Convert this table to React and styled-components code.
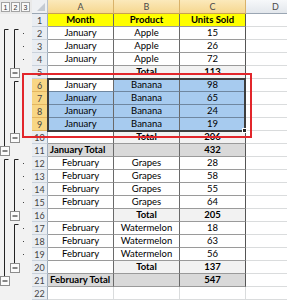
import React from "react";
import styled, {createGlobalStyle} from "styled-components";

const GlobalStyle = createGlobalStyle`
    body {
        margin: 0;
        background: #fff;
        font-family: Lato, "Liberation Sans", sans-serif;
    }
    #root {
        width: 287px;
        height: 300px;
        overflow: hidden;
    }
`;

const ROW_H = 13;
const HEAD_H = 14;

const rows = [
    {a: "Month", b: "Product", c: "Units Sold", kind: "head"},
    {a: "January", b: "Apple", c: "15"},
    {a: "January", b: "Apple", c: "26"},
    {a: "January", b: "Apple", c: "72"},
    {a: "", b: "Total", c: "113", kind: "sub"},
    {a: "January", b: "Banana", c: "98"},
    {a: "January", b: "Banana", c: "65"},
    {a: "January", b: "Banana", c: "24"},
    {a: "January", b: "Banana", c: "19"},
    {a: "", b: "Total", c: "206", kind: "sub"},
    {a: "January Total", b: "", c: "432", kind: "total"},
    {a: "February", b: "Grapes", c: "28"},
    {a: "February", b: "Grapes", c: "58"},
    {a: "February", b: "Grapes", c: "55"},
    {a: "February", b: "Grapes", c: "64"},
    {a: "", b: "Total", c: "205", kind: "sub"},
    {a: "February", b: "Watermelon", c: "18"},
    {a: "February", b: "Watermelon", c: "63"},
    {a: "February", b: "Watermelon", c: "56"},
    {a: "", b: "Total", c: "137", kind: "sub"},
    {a: "February Total", b: "", c: "547", kind: "total"},
    {kind: "empty"},
];

// selection A6:C9, active cell A6
const isSelected = (r, col) => r >= 6 && r <= 9 && !(r === 6 && col === 0);
const rowHighlighted = (r) => r >= 6 && r <= 9;

// outline groups (row numbers, 1-based)
const level1 = [
    {from: 2, btn: 11},
    {from: 12, btn: 21},
];
const level2 = [
    {from: 2, btn: 5},
    {from: 6, btn: 10},
    {from: 12, btn: 16},
    {from: 17, btn: 20},
];
const detailRows = [2, 3, 4, 6, 7, 8, 9, 12, 13, 14, 15, 17, 18, 19];

function cellStyle(row, r, col) {
    let bg = "#fff";
    let bold = false;
    if (row.kind === "head") {
        bg = "#ffff00";
        bold = true;
    } else if (row.kind === "sub") {
        if (col > 0) bg = "#f2f2f2";
        bold = true;
    } else if (row.kind === "total") {
        bg = "#d9d9d9";
        bold = true;
    }
    if (isSelected(r, col)) bg = "#a7cbef";
    return {bg, bold};
}

export default function App() {
    return (
        <>
            <GlobalStyle />
            <Sheet>
                <Gutter>
                    <LevelBar>
                        <LevelButton>1</LevelButton>
                        <LevelButton>2</LevelButton>
                        <LevelButton>3</LevelButton>
                    </LevelBar>
                    <OutlineSvg />
                </Gutter>
                <Grid>
                    <Corner>
                        <Triangle />
                    </Corner>
                    {["A", "B", "C", "D"].map((l, i) => (
                        <ColHead key={l} $hl={i < 3}>
                            {l}
                        </ColHead>
                    ))}
                    {rows.map((row, i) => {
                        const r = i + 1;
                        const empty = row.kind === "empty";
                        return (
                            <React.Fragment key={r}>
                                <RowHead $hl={rowHighlighted(r)}>{r}</RowHead>
                                {[row.a, row.b, row.c].map((txt, col) => {
                                    const s = cellStyle(row, r, col);
                                    return (
                                        <Cell
                                            key={col}
                                            $bg={empty ? "#fff" : s.bg}
                                            $bold={s.bold}
                                            $left={row.kind === "total" && col === 0}
                                            $vline={empty ? "#dadcdd" : col === 2 ? "#555" : "#6a6a6a"}
                                            $hline={
                                                empty
                                                    ? "#dadcdd"
                                                    : isSelected(r, col) || (r === 6 && col === 0)
                                                    ? "#6f87a0"
                                                    : "#9a9a9a"
                                            }
                                        >
                                            {txt}
                                        </Cell>
                                    );
                                })}
                                <Cell $vline="#dadcdd" $hline="#dadcdd" />
                            </React.Fragment>
                        );
                    })}
                </Grid>
                <Selection>
                    <FillHandle />
                </Selection>
                <RedFrame />
            </Sheet>
        </>
    );
}

function OutlineSvg() {
    const top = (r) => (r - 1) * ROW_H;
    const mid = (r) => (r - 1) * ROW_H + ROW_H / 2;
    const bracket = (g, x, bx, key) => (
        <g key={key}>
            <path
                d={`M${x + 4} ${top(g.from) + 2.5} H${x} V${top(g.btn) + 2}`}
                fill="none"
                stroke="#222"
                strokeWidth="1"
            />
            <rect x={bx} y={top(g.btn) + 2.5} width="9" height="9" fill="#fbfbfb" stroke="#8d8d8d" />
            <line x1={bx + 2} x2={bx + 7} y1={top(g.btn) + 7} y2={top(g.btn) + 7} stroke="#111" strokeWidth="1" />
        </g>
    );
    return (
        <svg width="32" height={ROW_H * 22} style={{display: "block"}}>
            {level1.map((g, i) => bracket(g, 4.5, 0.5, "l1" + i))}
            {level2.map((g, i) => bracket(g, 14.5, 10.5, "l2" + i))}
            {detailRows.map((r) => (
                <rect key={r} x="23" y={mid(r) - 0.5} width="1" height="1" fill="#444" />
            ))}
        </svg>
    );
}

const Sheet = styled.div`
    position: relative;
    display: flex;
    width: 287px;
    height: 300px;
    overflow: hidden;
`;

const Gutter = styled.div`
    width: 32px;
    flex-shrink: 0;
    background: #f2f2f2;
    display: flex;
    flex-direction: column;
`;

const LevelBar = styled.div`
    height: ${HEAD_H}px;
    box-sizing: border-box;
    display: flex;
    gap: 1px;
    padding: 2px 1px;
    background: #e9e9e9;
`;

const LevelButton = styled.div`
    width: 9px;
    height: 10px;
    box-sizing: border-box;
    border: 1px solid #a3a3a3;
    background: #f8f8f8;
    color: #333;
    font-family: "Liberation Sans", sans-serif;
    font-size: 7px;
    display: flex;
    align-items: center;
    justify-content: center;
`;

const Grid = styled.div`
    display: grid;
    grid-template-columns: 16px 66px 66px 66px 60px;
    grid-template-rows: ${HEAD_H}px repeat(22, ${ROW_H}px);
`;

const Corner = styled.div`
    box-sizing: border-box;
    background: #eef0f3;
    border-right: 1px solid #b9c2cc;
    border-bottom: 1px solid #9aa6b3;
    display: flex;
    align-items: flex-end;
    justify-content: flex-end;
    padding: 2px;
`;

const Triangle = styled.div`
    width: 0;
    height: 0;
    border-left: 8px solid transparent;
    border-bottom: 8px solid #c4cad2;
`;

const ColHead = styled.div`
    box-sizing: border-box;
    display: flex;
    align-items: center;
    justify-content: center;
    font-size: 9px;
    color: #4a4a4a;
    background: ${(p) =>
        p.$hl
            ? "linear-gradient(#fbe9bb, #f6d78f)"
            : "linear-gradient(#f6f8fa, #e3e7ec)"};
    border-right: 1px solid ${(p) => (p.$hl ? "#d9b26a" : "#c2cad3")};
    border-bottom: 1px solid ${(p) => (p.$hl ? "#c9a050" : "#9aa6b3")};
`;

const RowHead = styled.div`
    box-sizing: border-box;
    display: flex;
    align-items: center;
    justify-content: center;
    font-size: 9px;
    color: #444;
    background: ${(p) => (p.$hl ? "#f8d684" : "#e9edf2")};
    border-right: 1px solid ${(p) => (p.$hl ? "#d9a84a" : "#9eadbd")};
    border-bottom: 1px solid ${(p) => (p.$hl ? "#e3b560" : "#c9d1da")};
`;

const Cell = styled.div`
    box-sizing: border-box;
    display: flex;
    align-items: center;
    justify-content: ${(p) => (p.$left ? "flex-start" : "center")};
    padding: 0 2px;
    font-size: 9.5px;
    line-height: 1;
    color: #000;
    white-space: nowrap;
    font-weight: ${(p) => (p.$bold ? 700 : 400)};
    background: ${(p) => p.$bg || "#fff"};
    border-right: 1px solid ${(p) => p.$vline};
    border-bottom: 1px solid ${(p) => p.$hline};
`;

const Selection = styled.div`
    position: absolute;
    left: 47px;
    top: 78px;
    width: 199px;
    height: 54px;
    box-sizing: border-box;
    border: 2px solid #3d3d3d;
    pointer-events: none;
`;

const FillHandle = styled.div`
    position: absolute;
    right: -3px;
    bottom: -3px;
    width: 3px;
    height: 3px;
    background: #222;
    border: 1px solid #fff;
`;

const RedFrame = styled.div`
    position: absolute;
    left: 22px;
    top: 73px;
    width: 230px;
    height: 65px;
    box-sizing: border-box;
    border: 2px solid #e2262b;
    pointer-events: none;
`;
